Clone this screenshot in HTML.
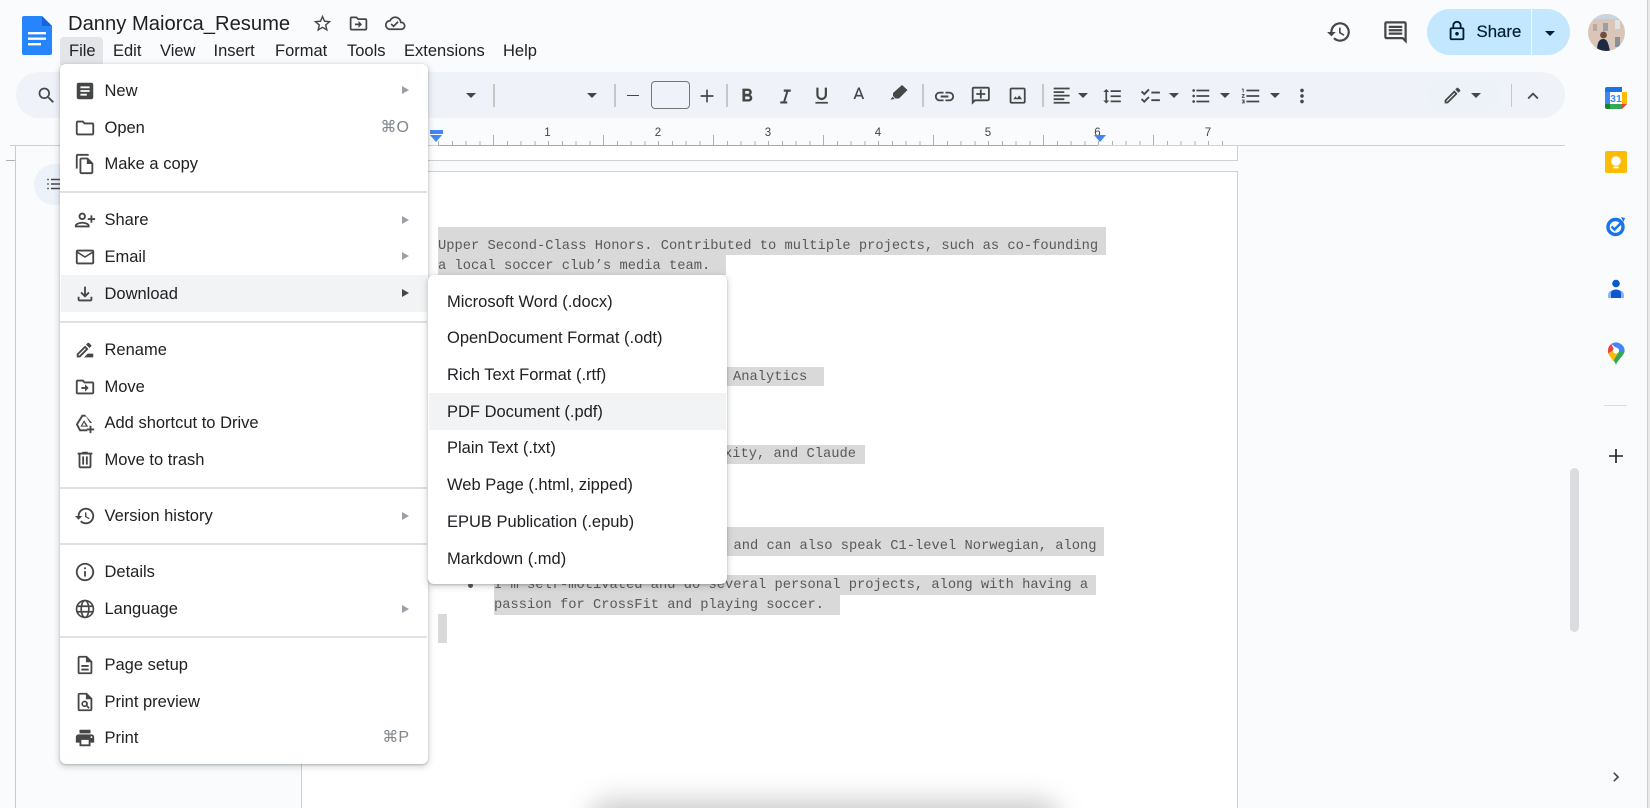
<!DOCTYPE html>
<html lang="en"><head><meta charset="utf-8"><title>Danny Maiorca_Resume - Google Docs</title>
<style>
html{margin:0;padding:0;width:1650px;height:808px;overflow:hidden}
body{margin:0;padding:0;width:1650px;height:808px;position:relative;overflow:hidden;background:#f9fbfd;font-family:"Liberation Sans",Arial,sans-serif;color:#202124}
div,span,svg{position:absolute}
#root{left:0;top:0;width:1650px;height:808px;overflow:hidden;background:#f9fbfd}
svg{fill:#444746;overflow:visible}
.mb{top:41px;height:20px;line-height:20px;font-size:16.5px;white-space:nowrap;color:#202124}
.m{left:104.5px;height:24px;line-height:24px;font-size:16.5px;white-space:nowrap;color:#202124}
.s{left:447px;height:24px;line-height:24px;font-size:16.5px;white-space:nowrap;color:#202124}
.ic{width:22px;height:22px;left:74px}
.sep{left:60px;width:367px;height:1.5px;background:#dfe1e5}
.ar{left:402px;width:0;height:0;border-left:7.5px solid #9aa0a6;border-top:4.5px solid transparent;border-bottom:4.5px solid transparent}
.sc{right:1241px;height:24px;line-height:24px;font-size:16px;color:#80868b;white-space:nowrap;font-family:"Liberation Sans","DejaVu Sans",sans-serif}
.hl{background:#d9d9d9}
.d{font-family:"Liberation Mono",monospace;font-size:13.75px;line-height:20px;height:20px;color:#595959;white-space:pre}
.tb{width:1.5px;height:23px;top:84px;background:#c7c7c7}
.car{width:0;height:0;border-left:5px solid transparent;border-right:5px solid transparent;border-top:5px solid #444746;top:93px}
.n{top:126px;width:20px;text-align:center;font-size:11.5px;line-height:14px;color:#444}
</style></head>
<body>
<div id="root">

<!-- doc pages -->
<div style="left:301px;top:146px;width:935px;height:14px;background:#fff;border:1.5px solid #d0d0d0;border-top:0"></div>
<div style="left:301px;top:171px;width:935px;height:650px;background:#fff;border:1.5px solid #d0d0d0"></div>

<!-- left ruler -->
<div style="left:15px;top:145px;width:1px;height:663px;background:#c8cacb"></div>
<div style="left:6px;top:160px;width:9px;height:1px;background:#b0b0b0"></div>
<div style="left:34px;top:164px;width:41px;height:41px;border-radius:50%;background:#edf2fa"></div>
<svg style="left:45px;top:175px" width="18" height="18" viewBox="0 0 24 24"><path d="M3 5h2v2H3zm0 6h2v2H3zm0 6h2v2H3zM8 5h13v2H8zm0 6h13v2H8zm0 6h13v2H8z"/></svg>

<!-- top ruler -->
<div style="left:10px;top:144.5px;width:1555px;height:1.5px;background:#d0d0d0"></div>
<div style="left:438px;top:144.5px;width:660px;height:1.5px;background:#a8a8a8"></div>
<div style="left:438px;top:141px;width:797px;height:4px;background:repeating-linear-gradient(90deg,#b0b0b0 0 1px,transparent 1px 13.75px)"></div>
<div style="left:493px;top:135px;width:742px;height:10px;background:repeating-linear-gradient(90deg,#b0b0b0 0 1px,transparent 1px 110px)"></div>
<span class="n" style="left:537.5px">1</span>
<span class="n" style="left:648px">2</span>
<span class="n" style="left:758px">3</span>
<span class="n" style="left:868px">4</span>
<span class="n" style="left:978px">5</span>
<span class="n" style="left:1087.5px">6</span>
<span class="n" style="left:1198px">7</span>
<div style="left:430px;top:130px;width:13px;height:4px;background:#4285f4"></div>
<div style="left:430px;top:135px;width:0;height:0;border-left:6.5px solid transparent;border-right:6.5px solid transparent;border-top:7px solid #4285f4"></div>
<div style="left:1093.5px;top:135px;width:0;height:0;border-left:6.5px solid transparent;border-right:6.5px solid transparent;border-top:7px solid #4285f4"></div>

<!-- selected document text -->
<div class="hl" style="left:438px;top:227px;width:668px;height:28px"></div>
<div class="hl" style="left:438px;top:255px;width:288px;height:20px"></div>
<div class="d" style="left:438px;top:237px">Upper Second-Class Honors. Contributed to multiple projects, such as co-founding</div>
<div class="d" style="left:438px;top:256.5px">a local soccer club’s media team.</div>

<div class="hl" style="left:494px;top:367px;width:330px;height:19px"></div>
<div class="d" style="left:733px;top:367.5px">Analytics</div>

<div class="hl" style="left:494px;top:445px;width:371px;height:19px"></div>
<div class="d" style="left:724px;top:445px">xity, and Claude</div>

<div class="hl" style="left:494px;top:527px;width:610px;height:29px"></div>
<div class="d" style="left:733.5px;top:536.5px">and can also speak C1-level Norwegian, along</div>

<div class="hl" style="left:494px;top:575px;width:602px;height:20px"></div>
<div class="hl" style="left:494px;top:594.5px;width:346px;height:20px"></div>
<div class="d" style="left:494px;top:576px">I’m self-motivated and do several personal projects, along with having a</div>
<div class="d" style="left:494px;top:596px">passion for CrossFit and playing soccer.</div>
<div style="left:468px;top:582.5px;width:5px;height:5px;border-radius:50%;background:#555"></div>
<div class="hl" style="left:438px;top:614px;width:9px;height:29px"></div>

<!-- bottom shadow -->
<div style="left:590px;top:800px;width:470px;height:40px;border-radius:20px;background:rgba(0,0,0,.2);filter:blur(13px)"></div>

<!-- header -->
<svg style="left:22px;top:16px" width="30" height="39" viewBox="0 0 30 39"><path fill="#2684fc" d="M2 0h18l10 10v27a2 2 0 0 1-2 2H2a2 2 0 0 1-2-2V2a2 2 0 0 1 2-2z"/><path fill="#1a63d8" d="M20 0l10 10H20z"/><path fill="#fff" d="M6 16h18v2.400H6zm0 5.500h18v2.400H6zm0 5.500h13v2.400H6z"/></svg>
<div style="left:68px;top:12px;height:24px;line-height:24px;font-size:20.2px;white-space:nowrap;color:#1f1f1f">Danny Maiorca_Resume</div>
<svg style="left:312px;top:13px" width="21" height="21" viewBox="0 0 24 24"><path d="M22 9.240l-7.190-.620L12 2 9.190 8.630 2 9.240l5.460 4.730L5.820 21 12 17.270 18.180 21l-1.630-7.030L22 9.240zM12 15.400l-3.760 2.270 1-4.280-3.320-2.880 4.380-.380L12 6.100l1.710 4.040 4.380.380-3.320 2.880 1 4.280L12 15.400z"/></svg>
<svg style="left:348px;top:13px" width="21" height="21" viewBox="0 0 24 24"><path d="M20 6h-8l-2-2H4c-1.100 0-2 .900-2 2v12c0 1.100.900 2 2 2h16c1.100 0 2-.900 2-2V8c0-1.100-.900-2-2-2zm0 12H4V6h5.170l2 2H20v10zm-8-1v-3H8v-2h4V9l4 4-4 4z"/></svg>
<svg style="left:385px;top:13px" width="20.500" height="20.500" viewBox="0 0 24 24"><path d="M19.350 10.040C18.670 6.590 15.640 4 12 4 9.110 4 6.600 5.640 5.350 8.040 2.340 8.360 0 10.910 0 14c0 3.310 2.690 6 6 6h13c2.760 0 5-2.240 5-5 0-2.640-2.050-4.780-4.650-4.960zM19 18H6c-2.210 0-4-1.790-4-4 0-2.050 1.530-3.760 3.560-3.970l1.070-.110.500-.950C8.080 7.140 9.940 6 12 6c2.620 0 4.880 1.860 5.390 4.430l.300 1.500 1.530.110c1.560.100 2.780 1.410 2.780 2.960 0 1.650-1.350 3-3 3zm-9-1l-3.500-3.500 1.410-1.410L10 14.180l4.600-4.600 1.410 1.410z"/></svg>
<div style="left:60px;top:37px;width:43px;height:28px;background:#e3e5e8;border-radius:4px 4px 0 0"></div>
<span class="mb" style="left:69px">File</span>
<span class="mb" style="left:113px">Edit</span>
<span class="mb" style="left:160px">View</span>
<span class="mb" style="left:213.500px">Insert</span>
<span class="mb" style="left:275px">Format</span>
<span class="mb" style="left:347px">Tools</span>
<span class="mb" style="left:404px">Extensions</span>
<span class="mb" style="left:503px">Help</span>

<svg style="left:1326px;top:19px" width="26" height="26" viewBox="0 0 24 24"><path d="M13 3c-4.970 0-9 4.030-9 9H1l3.890 3.890.070.140L9 12H6c0-3.870 3.130-7 7-7s7 3.130 7 7-3.130 7-7 7c-1.930 0-3.680-.790-4.940-2.060l-1.420 1.420C8.270 19.990 10.510 21 13 21c4.970 0 9-4.030 9-9s-4.030-9-9-9zm-1 5v5l4.280 2.540.720-1.210-3.500-2.080V8H12z"/></svg>
<svg style="left:1382px;top:19px" width="27" height="27" viewBox="0 0 24 24"><path d="M21.990 4c0-1.100-.890-2-1.990-2H4c-1.100 0-2 .900-2 2v12c0 1.100.900 2 2 2h14l4 4-.010-18zM20 4v13.170L18.830 16H4V4h16zM6 12h12v2H6zm0-3h12v2H6zm0-3h12v2H6z"/></svg>
<div style="left:1427px;top:9px;width:143px;height:46px;border-radius:23px;background:#c2e7ff"></div>
<div style="left:1531px;top:9px;width:1px;height:46px;background:#f4fbff"></div>
<svg style="left:1446px;top:20px;fill:#001d35" width="22" height="22" viewBox="0 0 24 24"><path d="M18 8h-1V6c0-2.760-2.240-5-5-5S7 3.240 7 6v2H6c-1.100 0-2 .900-2 2v10c0 1.100.900 2 2 2h12c1.100 0 2-.900 2-2V10c0-1.100-.900-2-2-2zM9 6c0-1.660 1.340-3 3-3s3 1.340 3 3v2H9V6zm9 14H6V10h12v10zm-6-3c1.100 0 2-.900 2-2s-.900-2-2-2-2 .900-2 2 .900 2 2 2z"/></svg>
<div style="left:1476.500px;top:20px;height:24px;line-height:24px;font-size:16.800px;color:#001d35;-webkit-text-stroke:.2px #001d35">Share</div>
<div style="left:1545px;top:31px;width:0;height:0;border-left:5px solid transparent;border-right:5px solid transparent;border-top:5px solid #001d35"></div>
<svg style="left:1588px;top:14px" width="37" height="37" viewBox="0 0 37 37"><defs><clipPath id="av"><circle cx="18.500" cy="18.500" r="18.500"/></clipPath></defs><g clip-path="url(#av)"><rect width="37" height="37" fill="#d9c6b8"/><rect x="0" y="0" width="37" height="5" fill="#c9d4de"/><rect x="15" y="9" width="5" height="8" fill="#9a9fa8"/><rect x="27" y="6" width="5" height="9" fill="#dfe3e8"/><rect x="27" y="23" width="5" height="10" fill="#8a8f99"/><rect x="5" y="10" width="4" height="7" fill="#b8aaa2"/><circle cx="15.500" cy="21" r="3.400" fill="#6f4e3e"/><path fill="#1c2a44" d="M9 37c0-8 2-12 6-12s5 3 7 12z"/></g></svg>

<!-- toolbar -->
<div style="left:16px;top:72px;width:1549px;height:46px;border-radius:23px;background:#eff3f9"></div>
<svg style="left:35.500px;top:84.500px" width="21" height="21" viewBox="0 0 24 24"><path d="M15.500 14h-.790l-.280-.270A6.471 6.471 0 0 0 16 9.500 6.500 6.500 0 1 0 9.500 16c1.610 0 3.090-.590 4.230-1.570l.270.280v.790l5 4.990L20.490 19l-4.990-5zm-6 0C7.010 14 5 11.990 5 9.500S7.010 5 9.500 5 14 7.010 14 9.500 11.990 14 9.500 14z"/></svg>
<div class="car" style="left:466px"></div>
<div class="tb" style="left:493px"></div>
<div class="car" style="left:587px"></div>
<div class="tb" style="left:614px"></div>
<div style="left:627px;top:94.500px;width:11.500px;height:1.800px;background:#444746"></div>
<div style="left:651px;top:81px;width:37px;height:26px;border:1.500px solid #747775;border-radius:4px"></div>
<svg style="left:695.500px;top:84.500px" width="22" height="22" viewBox="0 0 24 24"><path d="M19 12.900h-6.100V19h-1.800v-6.100H5v-1.800h6.100V5h1.800v6.100H19z"/></svg>
<div class="tb" style="left:726px"></div>
<svg style="left:736px;top:85.300px" width="22" height="22" viewBox="0 0 24 24"><path d="M15.600 10.790c.970-.670 1.650-1.770 1.650-2.790 0-2.260-1.750-4-4-4H7v14h7.040c2.090 0 3.710-1.700 3.710-3.790 0-1.520-.860-2.820-2.150-3.420zM10 6.500h3c.830 0 1.500.670 1.500 1.500s-.670 1.500-1.500 1.500h-3v-3zm3.500 9H10v-3h3.500c.830 0 1.500.670 1.500 1.500s-.670 1.500-1.500 1.500z"/></svg>
<svg style="left:774.500px;top:85.500px" width="21" height="21" viewBox="0 0 24 24"><path d="M10 4v2.500h2.800L9.400 17.500H6V20h8v-2.500h-2.200L15.200 6.500H18V4z"/></svg>
<svg style="left:810.800px;top:85.300px" width="21.300" height="21.300" viewBox="0 0 24 24"><path d="M12 17c3.310 0 6-2.690 6-6V3h-2.500v8c0 1.930-1.570 3.500-3.500 3.500S8.500 12.930 8.500 11V3H6v8c0 3.310 2.690 6 6 6zm-7 2v2h14v-2H5z"/></svg>
<svg style="left:849px;top:85px" width="19.700" height="19.700" viewBox="0 0 24 24"><path d="M11 3 5.500 17h2.250l1.120-3h6.240l1.120 3h2.250L13 3h-2zm-1.380 9L12 5.670 14.380 12H9.620z"/></svg>
<svg style="left:887px;top:82px" width="24" height="24" viewBox="887 82 24 24"><path d="M902 85l5.500 5-8.500 8.500h-3.500l-2.500-2.500v-3zM892.500 96.800l2.200 2.200-4.200.6z"/></svg>
<div class="tb" style="left:922px"></div>
<svg style="left:933px;top:84.500px" width="23" height="23" viewBox="0 0 24 24"><path d="M3.900 12c0-1.710 1.390-3.100 3.100-3.100h4V7H7c-2.760 0-5 2.240-5 5s2.240 5 5 5h4v-1.900H7c-1.710 0-3.100-1.390-3.100-3.100zM8 13h8v-2H8v2zm9-6h-4v1.900h4c1.710 0 3.100 1.390 3.100 3.100s-1.390 3.100-3.100 3.100h-4V17h4c2.760 0 5-2.240 5-5s-2.240-5-5-5z"/></svg>
<svg style="left:970px;top:85.200px" width="21.600" height="21.600" viewBox="0 0 24 24"><path d="M2 4c0-1.100.900-2 2-2h16c1.100 0 2 .900 2 2v12c0 1.100-.900 2-2 2H6l-4 4V4zm2 13.170L5.170 16H20V4H4v13.170zM13 5h-2v4H7v2h4v4h2v-4h4V9h-4z"/></svg>
<svg style="left:1007.300px;top:85.300px" width="21.300" height="21.300" viewBox="0 0 24 24"><path d="M19 3H5c-1.100 0-2 .900-2 2v14c0 1.100.900 2 2 2h14c1.100 0 2-.900 2-2V5c0-1.100-.900-2-2-2zm0 16H5V5h14v14zM7 16l2.500-3.200 1.800 2.200 2.500-3.300L17 16z"/></svg>
<div class="tb" style="left:1042px"></div>
<svg style="left:1051.300px;top:85.300px" width="21.300" height="21.300" viewBox="0 0 24 24"><path d="M3 3h18v2H3zm0 4h12v2H3zm0 4h18v2H3zm0 4h12v2H3zm0 4h18v2H3z"/></svg>
<div class="car" style="left:1077.500px"></div>
<svg style="left:1102px;top:85.700px" width="20.500" height="20.500" viewBox="0 0 24 24"><path d="M6 7h2.500L5 3.500 1.500 7H4v10H1.500L5 20.500 8.500 17H6V7zm4-2v2h12V5H10zm0 14h12v-2H10v2zm0-6h12v-2H10v2z"/></svg>
<svg style="left:1139px;top:84.500px" width="22.800" height="22.800" viewBox="0 0 24 24"><path d="M22 7h-9v2h9V7zm0 8h-9v2h9v-2zM5.540 11 2 7.460l1.410-1.410 2.120 2.120 4.240-4.240 1.410 1.410L5.540 11zm0 8L2 15.460l1.410-1.410 2.120 2.120 4.240-4.240 1.410 1.410L5.540 19z"/></svg>
<div class="car" style="left:1169px"></div>
<svg style="left:1190px;top:85px" width="22" height="22" viewBox="0 0 24 24"><path d="M4 10.500c-.830 0-1.500.670-1.500 1.500s.670 1.500 1.500 1.500 1.500-.670 1.500-1.500-.670-1.500-1.500-1.500zm0-6c-.830 0-1.500.670-1.500 1.500S3.170 7.500 4 7.500 5.500 6.830 5.500 6 4.830 4.500 4 4.500zm0 12c-.830 0-1.500.680-1.500 1.500s.680 1.500 1.500 1.500 1.500-.680 1.500-1.500-.670-1.500-1.500-1.500zM7 19h14v-2H7v2zm0-6h14v-2H7v2zm0-8v2h14V5H7z"/></svg>
<div class="car" style="left:1220px"></div>
<svg style="left:1240px;top:85px" width="22" height="22" viewBox="0 0 24 24"><path d="M2 17h2v.500H3v1h1v.500H2v1h3v-4H2v1zm1-9h1V4H2v1h1v3zm-1 3h1.800L2 13.100v.900h3v-1H3.200L5 10.900V10H2v1zm5-6v2h14V5H7zm0 14h14v-2H7v2zm0-6h14v-2H7v2z"/></svg>
<div class="car" style="left:1270px"></div>
<svg style="left:1291px;top:85px" width="22" height="22" viewBox="0 0 24 24"><path d="M12 8c1.100 0 2-.900 2-2s-.900-2-2-2-2 .900-2 2 .900 2 2 2zm0 2c-1.100 0-2 .900-2 2s.900 2 2 2 2-.900 2-2-.900-2-2-2zm0 6c-1.100 0-2 .900-2 2s.900 2 2 2 2-.900 2-2-.900-2-2-2z"/></svg>
<div style="left:1426px;top:78px;width:73px;height:34px;border-radius:17px;background:#edf1f8"></div>
<svg style="left:1441.500px;top:84.500px" width="21" height="21" viewBox="0 0 24 24"><path d="M3 17.250V21h3.750L17.810 9.940l-3.750-3.750L3 17.250zM5.920 19H5v-.920l9.060-9.060.920.920L5.920 19zM20.710 7.040a.996.996 0 0 0 0-1.410l-2.340-2.340a.996.996 0 0 0-1.410 0l-1.830 1.830 3.750 3.750 1.830-1.830z"/></svg>
<div class="car" style="left:1471px"></div>
<div class="tb" style="left:1510.500px"></div>
<svg style="left:1522px;top:85px" width="22" height="22" viewBox="0 0 24 24"><path d="M7.410 15.410 12 10.830l4.590 4.580L18 14l-6-6-6 6z"/></svg>

<!-- side panel -->
<svg style="left:1605px;top:87px" width="22" height="22" viewBox="0 0 22 22" ><path fill="#fff" d="M5 5h12v12H5z"/><path fill="#1a73e8" d="M5 0H2a2 2 0 0 0-2 2v3h5zM5 0h12v5H5z"/><path fill="#4285f4" d="M0 5h5v12H0z"/><path fill="#fbbc04" d="M17 5h5v12h-5z"/><path fill="#34a853" d="M5 17h12v5H5z"/><path fill="#188038" d="M0 17v3a2 2 0 0 0 2 2h3v-5z"/><path fill="#ea4335" d="M17 17h5l-5 5z"/><text x="11" y="15" text-anchor="middle" font-family="Liberation Sans,sans-serif" font-size="10.500" font-weight="700" fill="#4285f4">31</text></svg>
<svg style="left:1605px;top:151px" width="22" height="22" viewBox="0 0 22 22"><rect width="22" height="22" rx="2" fill="#fbbc04"/><circle cx="11" cy="10" r="4.800" fill="#fff"/><rect x="8.500" y="15.500" width="5" height="1.800" fill="#fff"/></svg>
<svg style="left:1605px;top:215px" width="22" height="22" viewBox="0 0 22 22"><circle cx="10.500" cy="12" r="7.500" fill="none" stroke="#1a73e8" stroke-width="3.400"/><path d="M6.500 11.500l3 3 6-6" fill="none" stroke="#1a73e8" stroke-width="2.400"/><path fill="#1a73e8" d="M16 2l4 1-1.500 4z"/></svg>
<svg style="left:1605px;top:279px" width="22" height="22" viewBox="0 0 22 22"><circle cx="11" cy="4.500" r="3.800" fill="#0b57d0"/><path fill="#8ab4f8" d="M3 19v-3a5 5 0 0 1 3.500-4.500h9A5 5 0 0 1 19 16v3z"/><path fill="#0b57d0" d="M6 19v-5c0-2 2-3.500 5-3.500s5 1.500 5 3.500v5z"/></svg>
<svg style="left:1607px;top:342px" width="18" height="23" viewBox="0 0 18 24"><path fill="#34a853" d="M9 24c-1-4-6-8-8-12l14-4 3 1c0 5-7 9-9 15z"/><path fill="#fbbc04" d="M1 12c1.500 3 3.500 5.500 5 8l5-8-5-3z"/><path fill="#4285f4" d="M4 2a9 9 0 0 1 14 7l-6 1-3-4z"/><path fill="#ea4335" d="M4 2a9 9 0 0 0-3 10l6-4z"/><circle cx="9" cy="9" r="3.200" fill="#fff"/></svg>
<div style="left:1604px;top:404.500px;width:23px;height:1.500px;background:#dadce0"></div>
<svg style="left:1604px;top:444px;fill:#1f1f1f" width="24" height="24" viewBox="0 0 24 24"><path d="M19 12.800h-6.200V19h-1.600v-6.200H5v-1.600h6.200V5h1.600v6.200H19z"/></svg>
<svg style="left:1604px;top:765px" width="24" height="24" viewBox="0 0 24 24"><path d="M10 6 8.590 7.410 13.170 12l-4.580 4.590L10 18l6-6z" transform="translate(12 12) scale(.8) translate(-12 -12)"/></svg>
<div style="left:1570px;top:468px;width:9px;height:164px;border-radius:5px;background:#dadce0"></div>
<div style="left:1647px;top:0;width:3px;height:808px;background:#e9e9e9;border-left:1px solid #cfcfcf;box-sizing:border-box"></div>

<!-- File menu -->
<div style="left:59.500px;top:64px;width:368.500px;height:700px;background:#fff;border-radius:6px;box-shadow:0 2px 6px 2px rgba(60,64,67,.15),0 1px 2px rgba(60,64,67,.3)"></div>
<div style="left:61px;top:275px;width:366px;height:37px;background:#f1f3f4"></div>
<div class="sep" style="top:191px;height:2px"></div>
<div class="sep" style="top:321px"></div>
<div class="sep" style="top:487px"></div>
<div class="sep" style="top:543px"></div>
<div class="sep" style="top:636px"></div>

<svg class="ic" style="top:79.500px" viewBox="0 0 24 24"><path d="M19 3H5c-1.100 0-2 .900-2 2v14c0 1.100.900 2 2 2h14c1.100 0 2-.900 2-2V5c0-1.100-.900-2-2-2zm-5 14H7v-2h7v2zm3-4H7v-2h10v2zm0-4H7V7h10v2z"/></svg>
<span class="m" style="top:78.500px">New</span><div class="ar" style="top:86px"></div>
<svg class="ic" style="top:116.500px" viewBox="0 0 24 24"><path d="M20 6h-8l-2-2H4c-1.100 0-1.990.900-1.990 2L2 18c0 1.100.900 2 2 2h16c1.100 0 2-.900 2-2V8c0-1.100-.900-2-2-2zm0 12H4V6h5.170l2 2H20v10z"/></svg>
<span class="m" style="top:115.500px">Open</span><span class="sc" style="top:115.500px">⌘O</span>
<svg class="ic" style="top:153px" viewBox="0 0 24 24"><path d="M16 1H4c-1.100 0-2 .900-2 2v14h2V3h12V1zm-1 4H8c-1.100 0-1.990.900-1.990 2L6 21c0 1.100.890 2 1.990 2H19c1.100 0 2-.900 2-2V11l-6-6zM8 21V7h6v5h5v9H8z"/></svg>
<span class="m" style="top:152px">Make a copy</span>

<svg class="ic" style="top:209px;transform:scaleX(-1)" viewBox="0 0 24 24"><path d="M15 12c2.210 0 4-1.790 4-4s-1.790-4-4-4-4 1.790-4 4 1.790 4 4 4zm0-6c1.100 0 2 .900 2 2s-.900 2-2 2-2-.900-2-2 .900-2 2-2zm0 8c-2.670 0-8 1.340-8 4v2h16v-2c0-2.660-5.330-4-8-4zm-6 4c.220-.720 3.310-2 6-2 2.700 0 5.800 1.290 6 2H9zm-3-3v-3h3v-2H6V7H4v3H1v2h3v3h2z"/></svg>
<span class="m" style="top:208px">Share</span><div class="ar" style="top:215.500px"></div>
<svg class="ic" style="top:245.500px" viewBox="0 0 24 24"><path d="M22 6c0-1.100-.900-2-2-2H4c-1.100 0-2 .900-2 2v12c0 1.100.900 2 2 2h16c1.100 0 2-.900 2-2V6zm-2 0l-8 5-8-5h16zm0 12H4V8l8 5 8-5v10z"/></svg>
<span class="m" style="top:244.700px">Email</span><div class="ar" style="top:252.300px"></div>
<svg class="ic" style="top:282.500px" viewBox="0 0 24 24"><path d="M12 16l-5-5 1.410-1.410L11 12.170V4h2v8.170l2.590-2.580L17 11l-5 5zM6 20c-1.100 0-2-.900-2-2v-3h2v3h12v-3h2v3c0 1.100-.900 2-2 2H6z"/></svg>
<span class="m" style="top:281.500px">Download</span><div class="ar" style="top:289px;border-left-color:#444746"></div>

<svg class="ic" style="top:339px" viewBox="0 0 24 24"><path d="M15 16l-4 4h10v-4h-6zM12.060 7.190L3 16.250V20h3.750l9.060-9.060-3.750-3.750zM5.920 18H5v-.920l7.060-7.060.920.920L5.920 18zM18.710 8.040c.390-.390.390-1.020 0-1.410l-2.340-2.340a1.003 1.003 0 0 0-1.410 0l-1.830 1.830 3.750 3.750 1.830-1.830z"/></svg>
<span class="m" style="top:338px">Rename</span>
<svg class="ic" style="top:375.500px" viewBox="0 0 24 24"><path d="M20 6h-8l-2-2H4c-1.100 0-2 .900-2 2v12c0 1.100.900 2 2 2h16c1.100 0 2-.900 2-2V8c0-1.100-.900-2-2-2zm0 12H4V6h5.170l2 2H20v10zm-8-1v-3H8v-2h4V9l4 4-4 4z"/></svg>
<span class="m" style="top:374.500px">Move</span>
<svg class="ic" style="top:412px" viewBox="0 0 24 24"><path d="M12 3H8.500L2 13.500 6 21h8.500v-2H7.200l-2.800-5.500L9.700 5h3.500l4.300 7h2.300zM11 9l-4 7h8.500z" /><path d="M19 15h-2v3h-3v2h3v3h2v-3h3v-2h-3z"/><path fill="#fff" d="M11 11.500l-2 3.300h4z"/></svg>
<span class="m" style="top:411px">Add shortcut to Drive</span>
<svg class="ic" style="top:449px" viewBox="0 0 24 24"><path d="M15 4V3H9v1H4v2h1v13c0 1.100.900 2 2 2h10c1.100 0 2-.900 2-2V6h1V4h-5zm2 15H7V6h10v13zM9 8h2v9H9zm4 0h2v9h-2z"/></svg>
<span class="m" style="top:448px">Move to trash</span>

<svg class="ic" style="top:505px" viewBox="0 0 24 24"><path d="M13 3c-4.970 0-9 4.030-9 9H1l3.890 3.890.070.140L9 12H6c0-3.870 3.130-7 7-7s7 3.130 7 7-3.130 7-7 7c-1.930 0-3.680-.790-4.940-2.060l-1.420 1.420C8.270 19.990 10.510 21 13 21c4.970 0 9-4.030 9-9s-4.030-9-9-9zm-1 5v5l4.280 2.540.720-1.210-3.500-2.080V8H12z"/></svg>
<span class="m" style="top:504px">Version history</span><div class="ar" style="top:511.500px"></div>

<svg class="ic" style="top:561px" viewBox="0 0 24 24"><path d="M11 7h2v2h-2zm0 4h2v6h-2zm1-9C6.480 2 2 6.480 2 12s4.480 10 10 10 10-4.480 10-10S17.520 2 12 2zm0 18c-4.410 0-8-3.590-8-8s3.590-8 8-8 8 3.590 8 8-3.590 8-8 8z"/></svg>
<span class="m" style="top:560px">Details</span>
<svg class="ic" style="top:598px;fill:none;stroke:#444746;stroke-width:1.800" viewBox="0 0 24 24"><circle cx="12" cy="12" r="9.200"/><ellipse cx="12" cy="12" rx="4.200" ry="9.200"/><path d="M3 9h18M3 15h18"/></svg>
<span class="m" style="top:597px">Language</span><div class="ar" style="top:604.500px"></div>

<svg class="ic" style="top:654px" viewBox="0 0 24 24"><path d="M8 16h8v2H8zm0-4h8v2H8zm6-10H6c-1.100 0-2 .900-2 2v16c0 1.100.890 2 1.990 2H18c1.100 0 2-.900 2-2V8l-6-6zm4 18H6V4h7v5h5v11z"/></svg>
<span class="m" style="top:653px">Page setup</span>
<svg class="ic" style="top:690.500px" viewBox="0 0 24 24"><path d="M14 2H6c-1.100 0-2 .900-2 2v16c0 1.100.890 2 1.990 2H18c1.100 0 2-.900 2-2V8l-6-6zm4 18H6V4h7v5h5v11z"/><path d="M11.500 10.500a3.500 3.500 0 1 0 2 6.400l2.500 2.500 1.200-1.200-2.500-2.500a3.500 3.500 0 0 0-3.200-5.200zm0 1.800a1.700 1.700 0 1 1 0 3.400 1.700 1.700 0 0 1 0-3.400z"/></svg>
<span class="m" style="top:689.500px">Print preview</span>
<svg class="ic" style="top:727px" viewBox="0 0 24 24"><path d="M19 8H5c-1.660 0-3 1.340-3 3v6h4v4h12v-4h4v-6c0-1.660-1.340-3-3-3zm-3 11H8v-5h8v5zm3-7c-.550 0-1-.450-1-1s.450-1 1-1 1 .450 1 1-.450 1-1 1zm-1-9H6v4h12V3z"/></svg>
<span class="m" style="top:726px">Print</span><span class="sc" style="top:726px">⌘P</span>

<!-- Download submenu -->
<div style="left:427.500px;top:275px;width:299.500px;height:309px;background:#fff;border-radius:6px;box-shadow:0 2px 6px 2px rgba(60,64,67,.15),0 1px 2px rgba(60,64,67,.3)"></div>
<div style="left:429px;top:393px;width:297px;height:37px;background:#f1f3f4"></div>
<span class="s" style="top:289.700px">Microsoft Word (.docx)</span>
<span class="s" style="top:326px">OpenDocument Format (.odt)</span>
<span class="s" style="top:363px">Rich Text Format (.rtf)</span>
<span class="s" style="top:399.500px">PDF Document (.pdf)</span>
<span class="s" style="top:436px">Plain Text (.txt)</span>
<span class="s" style="top:473px">Web Page (.html, zipped)</span>
<span class="s" style="top:509.700px">EPUB Publication (.epub)</span>
<span class="s" style="top:546.500px">Markdown (.md)</span>

</div>
</body></html>
